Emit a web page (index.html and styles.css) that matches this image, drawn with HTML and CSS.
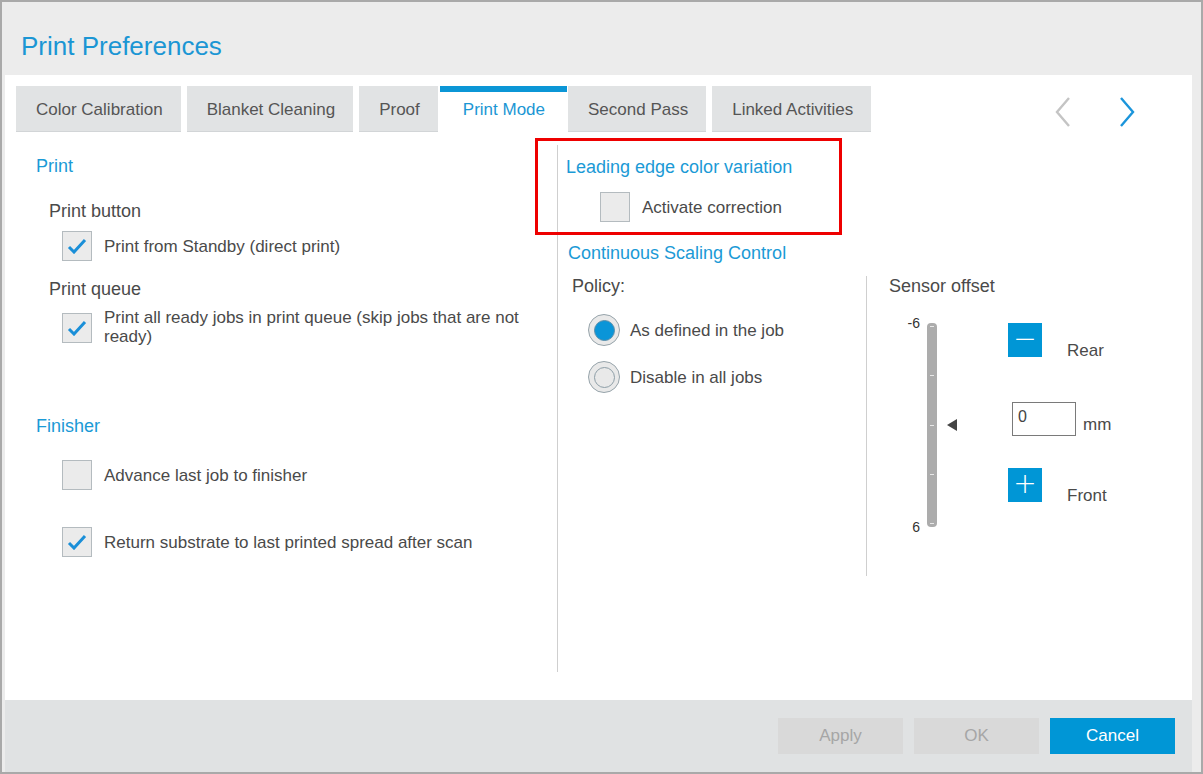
FILE: index.html
```html
<!DOCTYPE html>
<html lang="en">
<head>
  <meta charset="UTF-8" />
  <title>Print Preferences</title>
  <link rel="stylesheet" href="styles.css">
</head>
<body>
  <div class="window">
    <div class="header">
      <h1>Print Preferences</h1>
    </div>

    <div class="panel">
      <div class="tabbar">
        <div class="tab">Color Calibration</div>
        <div class="tab">Blanket Cleaning</div>
        <div class="tab">Proof</div>
        <div class="tab active">Print Mode</div>
        <div class="tab">Second Pass</div>
        <div class="tab">Linked Activities</div>
        <div class="tab-nav">
          <svg class="chev" width="20" height="32" viewBox="0 0 20 32"><polyline points="16,2 4,16 16,30" fill="none" stroke="#c4c4c4" stroke-width="2.4"/></svg>
          <svg class="chev" width="20" height="32" viewBox="0 0 20 32"><polyline points="4,2 16,16 4,30" fill="none" stroke="#1b95db" stroke-width="2.4"/></svg>
        </div>
      </div>

      <div class="columns">
        <div class="col-left">
          <div class="section-title">Print</div>
          <div class="sub-title">Print button</div>
          <div class="check-row">
            <span class="checkbox checked"><svg width="20" height="16" viewBox="0 0 20 16"><polyline points="2,9 7,14 18,2" fill="none" stroke="#1a8fd8" stroke-width="3"/></svg></span>
            <span class="check-label">Print from Standby (direct print)</span>
          </div>
          <div class="sub-title queue">Print queue</div>
          <div class="check-row">
            <span class="checkbox checked"><svg width="20" height="16" viewBox="0 0 20 16"><polyline points="2,9 7,14 18,2" fill="none" stroke="#1a8fd8" stroke-width="3"/></svg></span>
            <span class="check-label wrap">Print all ready jobs in print queue (skip jobs that are not ready)</span>
          </div>

          <div class="section-title finisher">Finisher</div>
          <div class="check-row">
            <span class="checkbox"></span>
            <span class="check-label">Advance last job to finisher</span>
          </div>
          <div class="check-row spaced">
            <span class="checkbox checked"><svg width="20" height="16" viewBox="0 0 20 16"><polyline points="2,9 7,14 18,2" fill="none" stroke="#1a8fd8" stroke-width="3"/></svg></span>
            <span class="check-label">Return substrate to last printed spread after scan</span>
          </div>
        </div>

        <div class="col-right">
          <div class="highlight"></div>
          <div class="section-title">Leading edge color variation</div>
          <div class="check-row activate">
            <span class="checkbox"></span>
            <span class="check-label">Activate correction</span>
          </div>
          <div class="section-title scaling">Continuous Scaling Control</div>

          <div class="scaling-body">
            <div class="policy">
              <div class="sub-title">Policy:</div>
              <div class="radio-row first">
                <span class="radio selected"></span>
                <span class="check-label">As defined in the job</span>
              </div>
              <div class="radio-row">
                <span class="radio"></span>
                <span class="check-label">Disable in all jobs</span>
              </div>
            </div>

            <div class="sensor">
              <div class="sub-title">Sensor offset</div>
              <div class="sensor-body">
                <div class="slider">
                  <div class="scale">
                    <span>-6</span>
                    <span>6</span>
                  </div>
                  <div class="track">
                    <span class="tick"></span>
                    <span class="tick"></span>
                    <span class="tick"></span>
                    <span class="tick"></span>
                    <span class="tick"></span>
                  </div>
                  <div class="pointer"></div>
                </div>

                <div class="controls">
                  <div class="ctrl-row">
                    <button class="step">&minus;</button>
                    <span class="ctrl-label">Rear</span>
                  </div>
                  <div class="ctrl-row value-row">
                    <input class="value" type="text" value="0" />
                    <span class="ctrl-label">mm</span>
                  </div>
                  <div class="ctrl-row plus-row">
                    <button class="step">+</button>
                    <span class="ctrl-label">Front</span>
                  </div>
                </div>
              </div>
            </div>
          </div>
        </div>
      </div>
    </div>

    <div class="footer">
      <button class="btn disabled">Apply</button>
      <button class="btn disabled">OK</button>
      <button class="btn primary">Cancel</button>
    </div>
  </div>
</body>
</html>
```

FILE: styles.css
```css
body {
  margin: 0;
  font-family: "Liberation Sans", Arial, sans-serif;
  color: #4a4a4a;
  background: #ffffff;
}

.window {
  width: 1203px;
  height: 774px;
  box-sizing: border-box;
  border: 2px solid #a9a9a9;
  background: #ececec;
  display: flex;
  flex-direction: column;
}

.header {
  height: 73px;
  display: flex;
  align-items: center;
  padding: 16px 0 0 19px;
  box-sizing: border-box;
}

.header h1 {
  margin: 0;
  font-size: 26px;
  font-weight: normal;
  color: #1b96d4;
}

.panel {
  height: 625px;
  margin: 0 9px 0 3px;
  background: #ffffff;
  padding: 11px 0 0 11px;
  box-sizing: border-box;
}

/* tabs */
.tabbar {
  display: flex;
  height: 46px;
}

.tab {
  background: #e1e3e4;
  border-bottom: 1px solid #d2d5d7;
  box-sizing: border-box;
  padding: 2px 18px 0 20px;
  margin-right: 6px;
  font-size: 17px;
  color: #555555;
  display: flex;
  align-items: center;
}

.tab.active {
  background: #ffffff;
  border-top: 6px solid #0b96d6;
  border-bottom: none;
  color: #1b96d4;
  padding: 0 22px 4px 23px;
  margin-left: -4px;
  margin-right: 1px;
}

.tab-nav {
  margin-left: auto;
  margin-right: 55px;
  display: flex;
  align-items: center;
  gap: 44px;
  padding-top: 5px;
}

/* columns */
.columns {
  display: flex;
  margin-top: 13px;
}

.col-left {
  width: 542px;
  height: 527px;
  padding: 11px 0 0 20px;
  box-sizing: border-box;
  border-right: 1px solid #cfcfcf;
}

.col-right {
  position: relative;
  flex: 1;
  padding: 12px 0 0 8px;
}

.section-title {
  font-size: 18px;
  line-height: 20px;
  color: #1b9ad6;
}

.sub-title {
  font-size: 18px;
  line-height: 20px;
  color: #4a4a4a;
  margin: 25px 0 0 13px;
}

.sub-title.queue {
  margin-top: 18px;
}

.check-row {
  display: flex;
  align-items: center;
  margin: 10px 0 0 26px;
}

.check-row.spaced {
  margin-top: 37px;
}

.checkbox {
  width: 30px;
  height: 30px;
  flex: none;
  box-sizing: border-box;
  border: 1px solid #b4bbbf;
  background: #ebebeb;
  display: flex;
  align-items: center;
  justify-content: center;
  margin-right: 12px;
}

.check-label {
  font-size: 17px;
  line-height: 19px;
  color: #4a4a4a;
}

.check-label.wrap {
  width: 430px;
  margin-top: -1px;
}

.section-title.finisher {
  margin-top: 70px;
}

.section-title.finisher + .check-row {
  margin-top: 24px;
}

/* right column */
.highlight {
  position: absolute;
  left: -23px;
  top: -7px;
  width: 307px;
  height: 97px;
  box-sizing: border-box;
  border: 3px solid #ee0000;
}

.check-row.activate {
  margin: 15px 0 0 34px;
}

.section-title.scaling {
  margin: 21px 0 0 2px;
}

.scaling-body {
  display: flex;
  margin-top: 13px;
  height: 300px;
}

.policy {
  width: 309px;
  box-sizing: border-box;
  border-right: 1px solid #cfcfcf;
  margin-left: -8px;
}

.policy .sub-title {
  margin: 0 0 0 14px;
}

.radio-row {
  display: flex;
  align-items: center;
  margin: 15px 0 0 30px;
}

.radio-row.first {
  margin-top: 18px;
}

.radio {
  width: 32px;
  height: 32px;
  box-sizing: border-box;
  border-radius: 50%;
  border: 1.5px solid #97a4ab;
  background: #e9e9e9;
  display: flex;
  align-items: center;
  justify-content: center;
  margin-right: 10px;
}

.radio::after {
  content: "";
  width: 21px;
  height: 21px;
  box-sizing: border-box;
  border-radius: 50%;
  border: 1.5px solid #8d9ea7;
}

.radio.selected::after {
  background: #0a95d8;
  border-color: #5b8eaa;
}

/* sensor offset */
.sensor {
  padding-left: 22px;
}

.sensor .sub-title {
  margin: 0;
}

.sensor-body {
  display: flex;
  margin-top: 27px;
}

.slider {
  display: flex;
  height: 204px;
}

.scale {
  width: 31px;
  margin: -9px 0 -9px;
  display: flex;
  flex-direction: column;
  justify-content: space-between;
  align-items: flex-end;
  font-size: 14px;
  line-height: 18px;
  color: #333333;
}

.track {
  width: 10px;
  margin-left: 7px;
  border-radius: 4px;
  background: #acacac;
  display: flex;
  flex-direction: column;
  justify-content: space-between;
  align-items: center;
  padding: 3px 0;
  box-sizing: border-box;
}

.tick {
  width: 4px;
  height: 1px;
  background: #e8e8e8;
}

.pointer {
  align-self: center;
  margin-left: 10px;
  width: 0;
  height: 0;
  border-top: 6px solid transparent;
  border-bottom: 6px solid transparent;
  border-right: 10px solid #444444;
}

.controls {
  margin-left: 51px;
}

.ctrl-row {
  display: flex;
  align-items: flex-start;
}

.step {
  width: 34px;
  height: 34px;
  border: none;
  padding: 0 0 3px;
  background: #0096d6;
  color: #ffffff;
  font-family: "DejaVu Sans", sans-serif;
  font-size: 28px;
  font-weight: 300;
  line-height: 30px;
}

.ctrl-label {
  font-size: 17px;
  line-height: 20px;
  margin: 18px 0 0 25px;
  color: #4a4a4a;
}

.value-row {
  margin: 41px 0 0 4px;
}

.value {
  width: 64px;
  height: 34px;
  box-sizing: border-box;
  border: 1px solid #7a7a7a;
  padding: 0 5px 5px;
  font-family: "Liberation Sans", Arial, sans-serif;
  font-size: 16px;
  color: #444444;
}

.value-row .ctrl-label {
  margin: 13px 0 0 7px;
}

.plus-row {
  margin-top: 32px;
}

/* footer */
.footer {
  height: 72px;
  margin: 0 9px 0 3px;
  background: #e0e2e3;
  display: flex;
  justify-content: flex-end;
  align-items: flex-start;
  gap: 11px;
  padding: 18px 17px 0 0;
  box-sizing: border-box;
}

.btn {
  width: 125px;
  height: 36px;
  border: none;
  font-family: "Liberation Sans", Arial, sans-serif;
  font-size: 17px;
}

.btn.disabled {
  background: #d9d9d9;
  color: #a6a6a6;
}

.btn.primary {
  background: #0096d6;
  color: #ffffff;
}
```
